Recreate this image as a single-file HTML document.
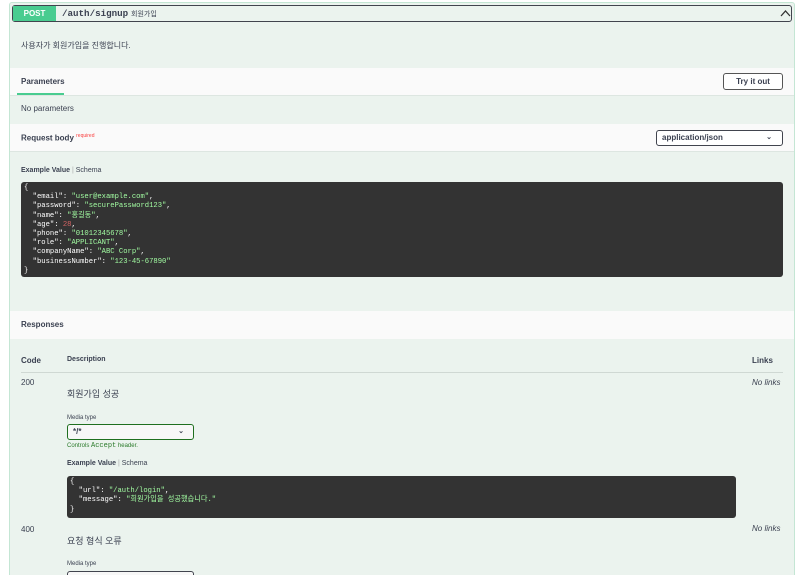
<!DOCTYPE html>
<html style="overflow:hidden;width:800px;height:575px"><head><meta charset="utf-8"><style>
*{margin:0;padding:0;box-sizing:border-box}
body{width:800px;height:575px;overflow:hidden;background:#fff;font-family:"Liberation Sans","Noto Sans CJK KR",sans-serif;color:#3b4151;position:relative}
.a{position:absolute}
.box{left:9px;top:2px;width:786px;height:600px;background:#ebf3ee;border:1px solid #c4e6d4;border-radius:3px}
.t{font-size:8px;white-space:nowrap}
.b{font-weight:bold}
.w{background:#fafafa;left:10px;width:784px}
.mono{font-family:"Liberation Mono","Noto Sans CJK KR",monospace}
.code{background:#333;border-radius:3px;color:#fff;font-size:7.2px;line-height:9.2px;padding:2px 3px;white-space:pre;font-family:"Liberation Mono","Noto Sans CJK KR",monospace}
.s{color:#a2fca2}.n{color:#d36363}
</style></head><body>
<div class="a box"></div>
<div class="a" style="left:12px;top:5px;width:780px;height:17px;border:1px solid #41444e;border-radius:3px;background:#ebf3ee"></div>
<div class="a" style="left:13px;top:6px;width:43px;height:15px;background:#49cc90;color:#fff;font-size:8px;font-weight:bold;text-align:center;line-height:15px">POST</div>
<div class="a mono b" style="left:62px;top:6px;font-size:9.2px;line-height:15px">/auth/signup</div>
<div class="a t" style="left:131px;top:9px;font-size:7px">회원가입</div>
<svg class="a" style="left:780px;top:9px" width="11" height="8" viewBox="0 0 11 8"><path d="M1 7 L5.5 2 L10 7" fill="none" stroke="#333" stroke-width="1.3"/></svg>
<div class="a t" style="left:21px;top:40px">사용자가 회원가입을 진행합니다.</div>
<div class="a w" style="top:68px;height:28px;border-bottom:1px solid #dde6e1"></div>
<div class="a t b" style="left:21px;top:77px">Parameters</div>
<div class="a" style="left:17px;top:93px;width:47px;height:2px;background:#49cc90"></div>
<div class="a" style="left:723px;top:73px;width:60px;height:17px;border:1px solid #555;border-radius:3px;background:#fff;font-size:8px;font-weight:bold;text-align:center;line-height:15px">Try it out</div>
<div class="a t" style="left:21px;top:104px">No parameters</div>
<div class="a w" style="top:124px;height:28px;border-bottom:1px solid #dde6e1"></div>
<div class="a t b" style="left:21px;top:133px">Request body <sup style="color:#f93e3e;font-weight:normal;font-size:5px">required</sup></div>
<div class="a" style="left:656px;top:130px;width:127px;height:16px;border:1px solid #41444e;border-radius:3px;background:#fff;font-size:8px;line-height:14px;padding-left:5px;font-weight:bold">application/json<span style="position:absolute;right:10px;font-size:7px">⌄</span></div>
<div class="a t" style="left:21px;top:167px;font-size:7px"><b>Example Value</b> <span style="color:#aaa">|</span> Schema</div>
<div class="a code" style="left:21px;top:182px;width:762px;height:95px">{
  "email": <span class="s">"user@example.com"</span>,
  "password": <span class="s">"securePassword123"</span>,
  "name": <span class="s">"홍길동"</span>,
  "age": <span class="n">28</span>,
  "phone": <span class="s">"01012345678"</span>,
  "role": <span class="s">"APPLICANT"</span>,
  "companyName": <span class="s">"ABC Corp"</span>,
  "businessNumber": <span class="s">"123-45-67890"</span>
}</div>
<div class="a w" style="top:311px;height:28px"></div>
<div class="a t b" style="left:21px;top:320px">Responses</div>
<div class="a t b" style="left:21px;top:356px">Code</div>
<div class="a t b" style="left:67px;top:356px;font-size:7px">Description</div>
<div class="a t b" style="left:752px;top:356px">Links</div>
<div class="a" style="left:21px;top:372px;width:762px;height:1px;background:#cfd8d3"></div>
<div class="a t" style="left:21px;top:378px">200</div>
<div class="a t" style="left:67px;top:387px;font-size:9px">회원가입 성공</div>
<div class="a t" style="left:752px;top:378px;font-style:italic">No links</div>
<div class="a t" style="left:67px;top:415px;font-size:6px">Media type</div>
<div class="a" style="left:67px;top:424px;width:127px;height:16px;border:1px solid #1f6f1f;border-radius:3px;background:#f7f7f7;font-size:8px;line-height:14px;padding-left:5px;font-weight:bold">*/*<span style="position:absolute;right:9px;font-size:7px">⌄</span></div>
<div class="a t" style="left:67px;top:442px;font-size:6px;color:#2a7a2a">Controls <span class="mono" style="font-size:7px">Accept</span> header.</div>
<div class="a t" style="left:67px;top:460px;font-size:7px"><b>Example Value</b> <span style="color:#aaa">|</span> Schema</div>
<div class="a code" style="left:67px;top:476px;width:669px;height:42px">{
  "url": <span class="s">"/auth/login"</span>,
  "message": <span class="s">"회원가입을 성공했습니다."</span>
}</div>
<div class="a t" style="left:21px;top:525px">400</div>
<div class="a t" style="left:67px;top:534px;font-size:9px">요청 형식 오류</div>
<div class="a t" style="left:752px;top:524px;font-style:italic">No links</div>
<div class="a t" style="left:67px;top:561px;font-size:6px">Media type</div>
<div class="a" style="left:67px;top:571px;width:127px;height:16px;border:1px solid #41444e;border-radius:3px;background:#f7f7f7"></div>
</body></html>
